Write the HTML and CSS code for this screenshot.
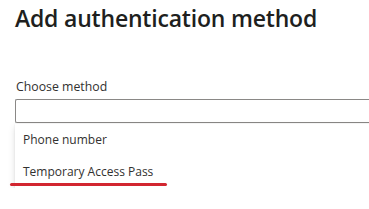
FILE: index.html
```html
<!DOCTYPE html>
<html lang="en">
<head>
  <meta charset="UTF-8" />
  <title>Add authentication method</title>
  <link rel="stylesheet" href="styles.css">
</head>
<body>

<div class="panel">
  <h1 class="title">Add authentication method</h1>

  <div class="field">
    <label class="field-label">Choose method</label>
    <div class="select"></div>

    <!-- Dropdown menu -->
    <ul class="menu">
      <li class="menu-item">Phone number</li>
      <li class="menu-item">Temporary Access Pass</li>
    </ul>
    <div class="highlight"></div>
  </div>
</div>

</body>
</html>
```

FILE: styles.css
```css
html, body {
  margin: 0; padding: 0;
  background: #fff;
  font-family: "Open Sans", "Noto Sans", sans-serif;
  color: #323130;
  overflow: hidden;
}

.panel {
  padding: 3px 0 0 15px;
}

.title {
  margin: 0;
  font-size: 23px;
  font-weight: 600;
  line-height: 31px;
  color: #201f1e;
  letter-spacing: -0.2px;
}

.field {
  position: relative;
  margin-top: 43px;
}

.field-label {
  display: block;
  font-size: 12.3px;
  line-height: 20px;
  padding: 0 0 2px 1px;
}

.select {
  height: 22px;
  border: 1px solid #8a8886;
  border-right: none;
  border-radius: 2px 0 0 2px;
  margin-right: -10px;
}

.menu {
  list-style: none;
  margin: 1px -10px 0 0;
  padding: 0;
  background: #fff;
  box-shadow: 0 3px 7px rgba(0, 0, 0, 0.13), 0 0 2px rgba(0, 0, 0, 0.08);
}

.menu-item {
  height: 32px;
  line-height: 32px;
  padding-left: 8px;
  font-size: 12px;
}

.highlight {
  position: absolute;
  left: -5px;
  top: 106px;
  width: 157px;
  height: 3px;
  border-radius: 2px;
  background: #d22630;
}
```
